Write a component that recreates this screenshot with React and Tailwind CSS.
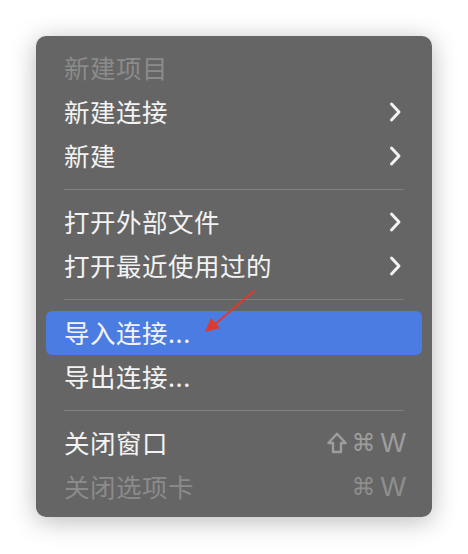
import React from "react";

const font = { fontFamily: '"Noto Sans CJK SC", "Noto Sans", sans-serif' };

function Chevron() {
  return (
    <svg width="14" height="22" viewBox="0 0 14 22" className="shrink-0">
      <path d="M3.5 3 L11 11 L3.5 19" fill="none" stroke="#f2f2f2" strokeWidth="3" strokeLinecap="round" strokeLinejoin="round" />
    </svg>
  );
}

function ShiftIcon({ color }) {
  return (
    <svg width="20" height="22" viewBox="0 0 20 22" className="shrink-0">
      <path d="M10 1.8 L18.6 11 L14 11 L14 20 L6 20 L6 11 L1.4 11 Z" fill="none" stroke={color} strokeWidth="2.4" strokeLinejoin="round" />
    </svg>
  );
}

function Row({ label, disabled, chevron, highlight, shortcut }) {
  return (
    <div
      className={
        "h-[44px] flex items-center justify-between pl-[18px] rounded-[6px] " +
        (shortcut ? "pr-[16px] " : "pr-[20px] ") +
        (highlight ? "bg-[#4b7ce1]" : "")
      }
    >
      <span className={"text-[25.5px] leading-none tracking-[0.5px] -mt-[2px] " + (disabled ? "text-[#8b8b8b]" : "text-[#f3f3f3]")}>
        {label}
      </span>
      {chevron && <Chevron />}
      {shortcut}
    </div>
  );
}

function Sep() {
  return (
    <div className="h-[22px] flex items-center px-[18px]">
      <div className="h-px w-full bg-[#808080]" />
    </div>
  );
}

function Shortcut({ shift, color }) {
  return (
    <div className="flex items-center gap-[5px]" style={{ color }}>
      {shift && <ShiftIcon color={color} />}
      <span className="text-[24px] leading-none" style={{ fontFamily: '"DejaVu Sans", sans-serif' }}>⌘</span>
      <span className="text-[27px] leading-none" style={{ fontFamily: '"Liberation Sans", sans-serif' }}>W</span>
    </div>
  );
}

export default function App() {
  return (
    <div className="w-[468px] h-[554px] bg-white relative pt-[36px] pl-[36px]" style={font}>
      <div className="w-[396px] h-[481px] bg-[#656565] rounded-[10px] shadow-[0_4px_26px_rgba(0,0,0,0.28)] pt-[10px] pb-[9px] px-[10px]">
        <Row label="新建项目" disabled />
        <Row label="新建连接" chevron />
        <Row label="新建" chevron />
        <Sep />
        <Row label="打开外部文件" chevron />
        <Row label="打开最近使用过的" chevron />
        <Sep />
        <div className="mt-[1px]">
          <Row label="导入连接..." highlight />
        </div>
        <Row label="导出连接..." />
        <Sep />
        <Row label="关闭窗口" shortcut={<Shortcut shift color="#9d9d9d" />} />
        <Row label="关闭选项卡" disabled shortcut={<Shortcut color="#8e8e8e" />} />
      </div>
      <svg className="absolute left-0 top-0 pointer-events-none" width="468" height="554" viewBox="0 0 468 554">
        <line x1="254" y1="291" x2="214" y2="325" stroke="#e0392e" strokeWidth="2" strokeLinecap="round" />
        <path d="M205 332 L211 318 L220 328 Z" fill="#e0392e" />
      </svg>
    </div>
  );
}
